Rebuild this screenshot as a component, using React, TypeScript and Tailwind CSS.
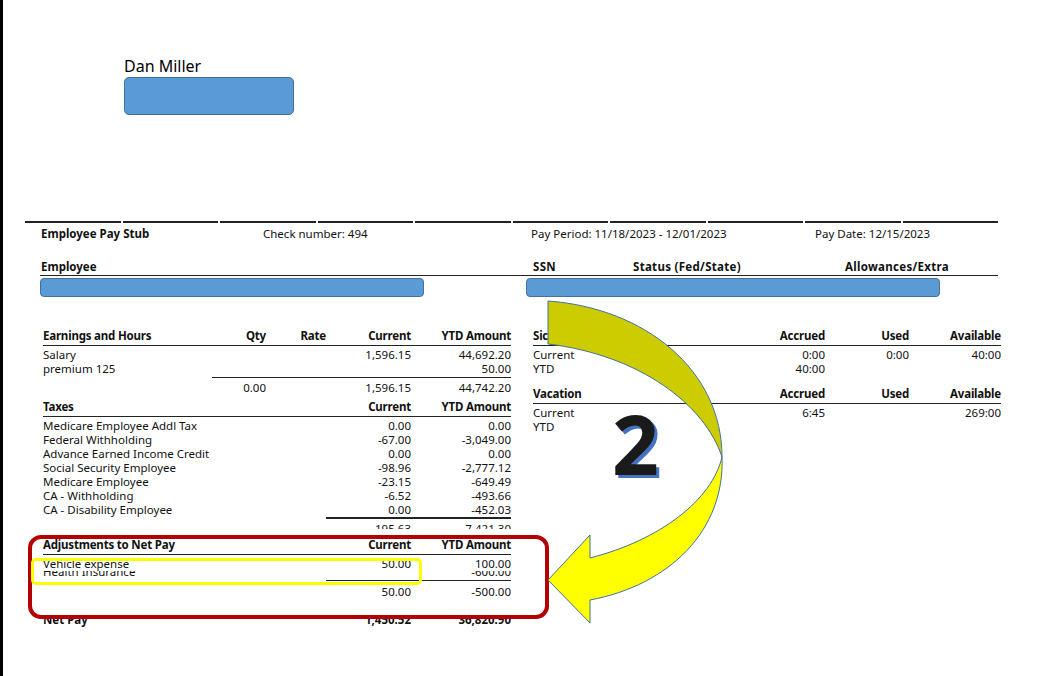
const f = '[font-family:"Liberation_Sans",Arial,sans-serif]';

const Hdr = ({ cells, cols }: { cells: string[]; cols: string }) => (
  <div className={`grid ${cols} h-[19px] mb-[2px] items-start border-b-[1.5px] border-[#222] font-bold tracking-[-0.2px]`}>
    {cells.map((c, i) => (
      <div key={i} className={i === 0 ? '' : 'text-right'}>{c}</div>
    ))}
  </div>
);

const Row = ({ cells, cols }: { cells: string[]; cols: string }) => (
  <div className={`grid ${cols} h-[14px] leading-[14px]`}>
    {cells.map((c, i) => (
      <div key={i} className={i === 0 ? 'whitespace-nowrap' : 'text-right'}>{c}</div>
    ))}
  </div>
);

const L = 'grid-cols-[1fr_60px_60px_85px_100px]';
const L2 = 'grid-cols-[1fr_85px_100px]';
const R = 'grid-cols-[1fr_92px_84px_92px]';

const taxes = [
  ['Medicare Employee Addl Tax', '0.00', '0.00'],
  ['Federal Withholding', '-67.00', '-3,049.00'],
  ['Advance Earned Income Credit', '0.00', '0.00'],
  ['Social Security Employee', '-98.96', '-2,777.12'],
  ['Medicare Employee', '-23.15', '-649.49'],
  ['CA - Withholding', '-6.52', '-493.66'],
  ['CA - Disability Employee', '0.00', '-452.03'],
];

export default function App() {
  return (
    <div className={`relative w-[1047px] h-[676px] bg-white border-l-[3px] border-black overflow-hidden text-[11.5px] text-[#111] ${f}`}>
      <div className="pl-[121px] pt-[57px]">
        <div className='[font-family:"Liberation_Serif",serif] text-[16px] leading-[18px] text-black'>Dan Miller</div>
        <div className="mt-[2px] w-[170px] h-[38px] bg-[#5b9bd5] border border-[#41719c] rounded-[5px]" />
      </div>

      <div className="ml-[22px] mt-[106px] w-[973px] flex gap-[2px]">
        {Array.from({ length: 10 }).map((_, i) => (
          <div key={i} className="flex-1 h-[1.5px] bg-[#222]" />
        ))}
      </div>

      <div className="flex mt-[4px] h-[14px] leading-[14px]">
        <div className="ml-[38px] w-[222px] font-bold">Employee Pay Stub</div>
        <div className="w-[268px]">Check number: 494</div>
        <div className="w-[284px]">Pay Period: 11/18/2023 - 12/01/2023</div>
        <div>Pay Date: 12/15/2023</div>
      </div>

      <div className="flex mt-[19px]">
        <div className="ml-[37px] w-[483px] flex flex-col">
          <div className="pl-[1px] h-[16px] leading-[14px] font-bold border-b-[1.5px] border-[#222]">Employee</div>
          <div className="mt-[2px] w-[384px] h-[19px] bg-[#5b9bd5] border border-[#41719c] rounded-[4px]" />

          <div className="mt-[30px] ml-[3px] w-[468px]">
            <Hdr cols={L} cells={['Earnings and Hours', 'Qty', 'Rate', 'Current', 'YTD Amount']} />
            <Row cols={L} cells={['Salary', '', '', '1,596.15', '44,692.20']} />
            <Row cols={L} cells={['premium 125', '', '', '', '50.00']} />
            <div className="ml-[169px] mt-[1px] h-[1.5px] bg-[#222]" />
            <div className="mt-[3px]"><Row cols={L} cells={['', '0.00', '', '1,596.15', '44,742.20']} /></div>
            <div className="mt-[3px]"><Hdr cols={L2} cells={['Taxes', 'Current', 'YTD Amount']} /></div>
            <div className="mt-[1px]">
              {taxes.map((t, i) => <Row key={i} cols={L2} cells={t} />)}
            </div>
            <div className="ml-[283px] h-[1.5px] bg-[#222]" />
            <div className="h-[7px] mt-[3px] overflow-hidden">
              <Row cols={L2} cells={['', '-195.63', '-7,421.30']} />
            </div>
            <div className="mt-[7px]"><Hdr cols={L2} cells={['Adjustments to Net Pay', 'Current', 'YTD Amount']} /></div>
            <div className="mt-[1px]"><Row cols={L2} cells={['Vehicle expense', '50.00', '100.00']} /></div>
            <div className="h-[8px] overflow-hidden flex flex-col justify-end">
              <Row cols={L2} cells={['Health Insurance', '', '-600.00']} />
            </div>
            <div className="ml-[283px] mt-[1px] h-[1.5px] bg-[#222]" />
            <div className="mt-[4px]"><Row cols={L2} cells={['', '50.00', '-500.00']} /></div>
            <div className="mt-[14px] font-bold"><Row cols={L2} cells={['Net Pay', '1,450.52', '36,820.90']} /></div>
          </div>
        </div>

        <div className="w-[475px] flex flex-col">
          <div className="grid grid-cols-[100px_212px_1fr] h-[16px] leading-[14px] font-bold border-b-[1.5px] border-[#222] pl-[10px] tracking-[0.3px]">
            <div>SSN</div>
            <div>Status (Fed/State)</div>
            <div>Allowances/Extra</div>
          </div>
          <div className="mt-[2px] w-[414px] h-[19px] bg-[#5b9bd5] border border-[#41719c] rounded-[4px] ml-[3px]" />

          <div className="mt-[30px] ml-[10px] w-[468px]">
            <Hdr cols={R} cells={['Sick', 'Accrued', 'Used', 'Available']} />
            <Row cols={R} cells={['Current', '0:00', '0:00', '40:00']} />
            <Row cols={R} cells={['YTD', '40:00', '', '']} />
            <div className="mt-[9px]"><Hdr cols={R} cells={['Vacation', 'Accrued', 'Used', 'Available']} /></div>
            <Row cols={R} cells={['Current', '6:45', '', '269:00']} />
            <Row cols={R} cells={['YTD', '', '', '']} />
          </div>
        </div>
      </div>

      {/* highlight boxes */}
      <div className="absolute left-[25px] top-[535px] w-[521px] h-[84px] border-[4px] border-[#b30000] rounded-[13px]" />
      <div className="absolute left-[28px] top-[558px] w-[391px] h-[27px] border-[3px] border-[#ffff00] rounded-[5px]" />

      {/* curved arrow */}
      <svg className="absolute left-[-3px] top-0" width="1047" height="676" viewBox="0 0 1047 676">
        <path d="M548,301 C645,308 722,370 722,457 C705,405 640,355 548,344 Z" fill="#cccc00" stroke="#41719c" strokeWidth="1" />
        <path d="M722,457 C725,530 670,585 590,600 L590,623 L548,580 L590,535 L590,558 C660,540 712,500 722,457 Z" fill="#ffff00" stroke="#41719c" strokeWidth="1" />
      </svg>
      <div className='absolute left-[609px] top-[402px] text-[82px] leading-[82px] font-bold text-[#1a1a1a] [text-shadow:3px_3px_0_#4472c4] [font-family:"Liberation_Sans",sans-serif]'>2</div>
    </div>
  );
}
